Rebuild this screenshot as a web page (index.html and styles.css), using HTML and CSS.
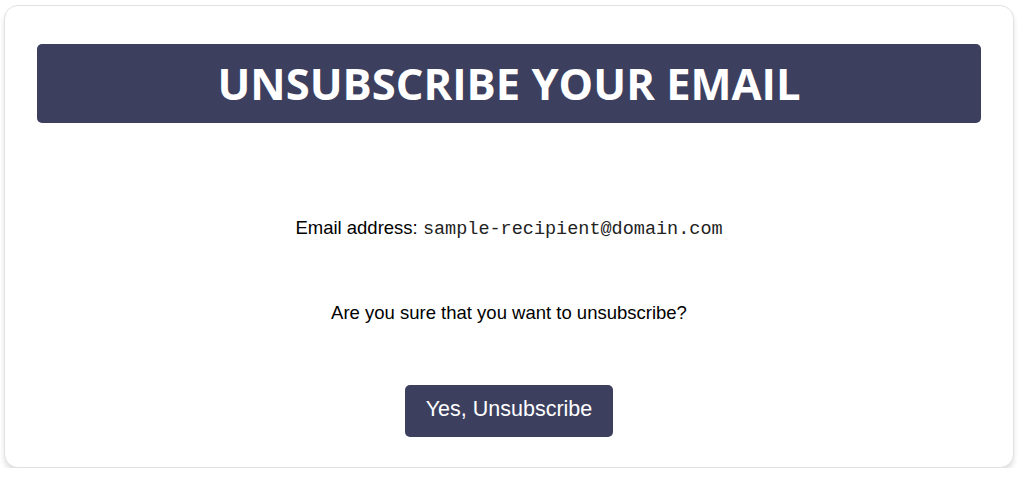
FILE: index.html
```html
<!DOCTYPE html>
<html>
<head>
<meta charset="utf-8">
<link rel="stylesheet" href="styles.css">
</head>
<body>
<div class="card">
  <div class="banner"><h1 class="title">UNSUBSCRIBE YOUR EMAIL</h1></div>
  <p class="email"><span class="label">Email address:</span> <span class="addr">sample-recipient@domain.com</span></p>
  <p class="question">Are you sure that you want to unsubscribe?</p>
  <button class="btn">Yes, Unsubscribe</button>
</div>
</body>
</html>
```
FILE: styles.css
```css
html, body { margin: 0; padding: 0; background: #ffffff; }
body { padding: 5px 0 0 4px; font-family: "Liberation Sans", Arial, sans-serif; }
.card {
  box-sizing: border-box;
  width: 1010px;
  height: 463px;
  border: 1px solid #e2e2e2;
  border-radius: 14px;
  background: #fff;
  box-shadow: 0 4px 5px rgba(0,0,0,0.12);
  padding: 38px 32px 0 32px;
  display: flex;
  flex-direction: column;
  align-items: center;
}
.banner {
  align-self: stretch;
  height: 79px;
  background: #3d3f5f;
  border-radius: 5px;
  display: flex;
  align-items: center;
  justify-content: center;
}
.title {
  margin: 0;
  color: #fff;
  font-family: "Open Sans", sans-serif;
  font-weight: 700;
  font-size: 43.5px;
  line-height: 1;
}
.email {
  margin: 94px 0 0 0;
  font-size: 18.5px;
  line-height: 22px;
  color: #000;
}
.addr { font-family: "Liberation Mono", "Courier New", monospace; font-size: 18.5px; color: #222; }
.question {
  margin: 61px 0 0 0;
  font-size: 18.5px;
  line-height: 22px;
  color: #000;
}
.btn {
  margin-top: 61px;
  width: 208px;
  height: 52px;
  border: none;
  border-radius: 5px;
  background: #3d3f5f;
  color: #fff;
  font-family: "Liberation Sans", Arial, sans-serif;
  font-size: 21.5px;
  line-height: 1;
  padding: 0 0 3px 0;
}
```
